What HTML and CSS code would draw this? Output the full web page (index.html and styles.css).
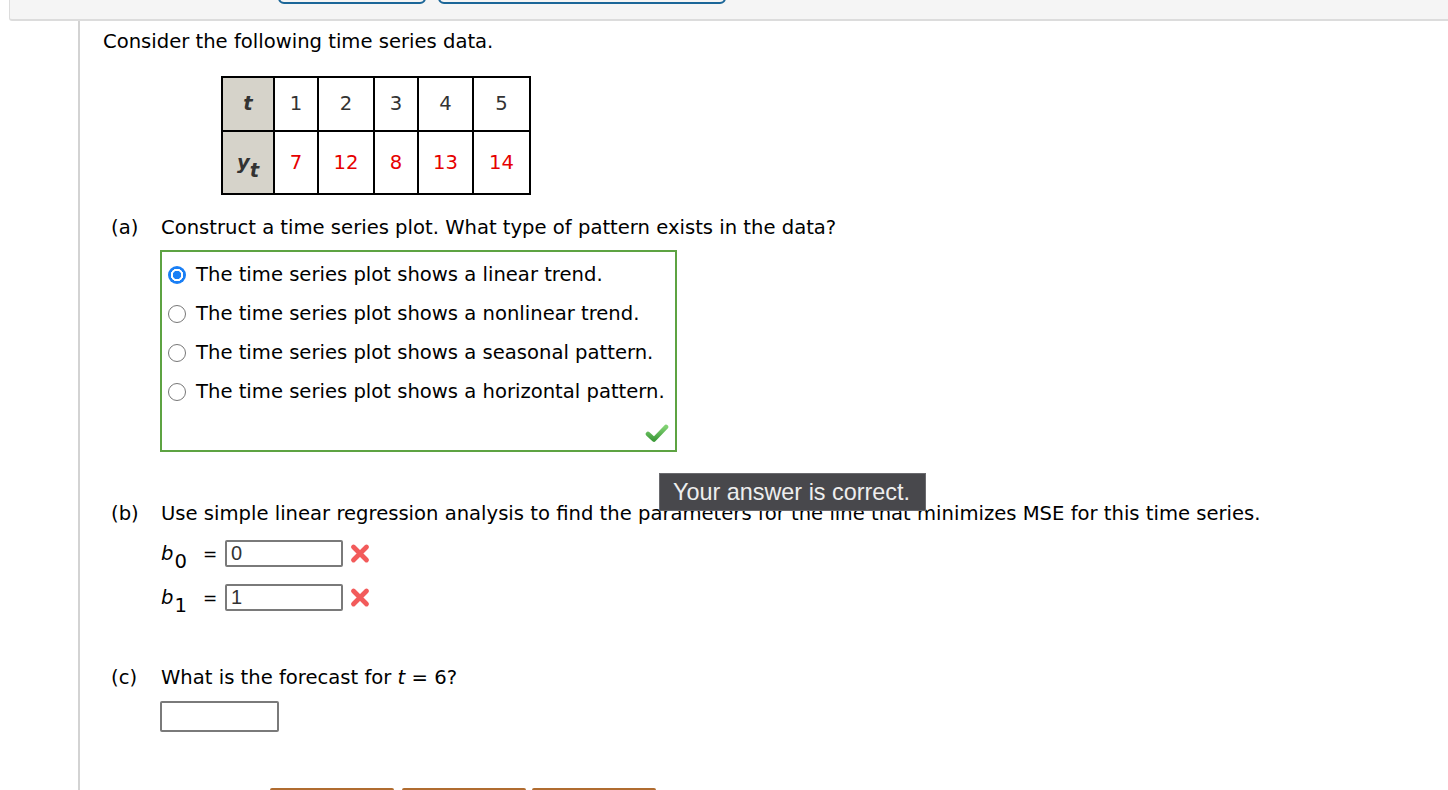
FILE: index.html
```html
<!DOCTYPE html>
<html>
<head>
<meta charset="utf-8">
<link rel="stylesheet" href="styles.css">
</head>
<body>
<div class="topbar">
  <div class="tb-btn tb-btn1"></div>
  <div class="tb-btn tb-btn2"></div>
</div>
<div class="page">
  <div class="gutter"></div>
  <div class="content">
    <p class="intro">Consider the following time series data.</p>
    <table class="data">
      <tr class="r1">
        <th class="c0"><i>t</i></th>
        <td class="c1">1</td><td class="c2">2</td><td class="c3">3</td><td class="c4">4</td><td class="c5">5</td>
      </tr>
      <tr class="r2">
        <th class="c0"><i>y<sub>t</sub></i></th>
        <td class="red">7</td><td class="red">12</td><td class="red">8</td><td class="red">13</td><td class="red">14</td>
      </tr>
    </table>

    <div class="qrow qa"><span class="qlabel">(a)</span><span>Construct a time series plot. What type of pattern exists in the data?</span></div>
    <div class="choices">
      <div class="opt"><span class="radio sel"></span><span>The time series plot shows a linear trend.</span></div>
      <div class="opt"><span class="radio"></span><span>The time series plot shows a nonlinear trend.</span></div>
      <div class="opt"><span class="radio"></span><span>The time series plot shows a seasonal pattern.</span></div>
      <div class="opt"><span class="radio"></span><span>The time series plot shows a horizontal pattern.</span></div>
      <svg class="check" width="24" height="20" viewBox="0 0 24 20">
        <defs><linearGradient id="g" x1="0" y1="0" x2="0" y2="1"><stop offset="0" stop-color="#80d172"/><stop offset="1" stop-color="#3f9c3b"/></linearGradient></defs>
        <path d="M3 11 L9 16.5 L21 4" fill="none" stroke="url(#g)" stroke-width="4.6" stroke-linecap="round" stroke-linejoin="round"/>
      </svg>
    </div>

    <div class="qrow qb"><span class="qlabel">(b)</span><span>Use simple linear regression analysis to find the parameters for the line that minimizes MSE for this time series.</span></div>
    <div class="brow brow0">
      <span class="var"><i>b</i><sub>0</sub></span><span class="eq">=</span><span class="inp">0</span>
      <svg class="xmark" width="22" height="21" viewBox="0 0 22 21"><path d="M4.5 4 L17.5 17 M17.5 4 L4.5 17" stroke="#f25b5b" stroke-width="4.8" stroke-linecap="round"/></svg>
    </div>
    <div class="brow brow1">
      <span class="var"><i>b</i><sub>1</sub></span><span class="eq">=</span><span class="inp">1</span>
      <svg class="xmark" width="22" height="21" viewBox="0 0 22 21"><path d="M4.5 4 L17.5 17 M17.5 4 L4.5 17" stroke="#f25b5b" stroke-width="4.8" stroke-linecap="round"/></svg>
    </div>

    <div class="qrow qc"><span class="qlabel">(c)</span><span>What is the forecast for <i>t</i> = 6?</span></div>
    <div class="cinp"></div>

    <div class="bottombtns">
      <div class="bbtn bb1"></div><div class="bbtn bb2"></div><div class="bbtn bb3"></div>
    </div>

    <div class="tooltip">Your answer is correct.</div>
  </div>
</div>
</body>
</html>
```
FILE: styles.css
```css
html, body {
  margin: 0;
  padding: 0;
  background: #fff;
  overflow: hidden;
  height: 790px;
}
body {
  font-family: Verdana, "DejaVu Sans", sans-serif;
  font-size: 19.6px;
  color: #000;
}
.topbar {
  margin-left: 9px;
  height: 19px;
  background: #f5f5f5;
  border-left: 1px solid #dcdcdc;
  border-bottom: 2px solid #dcdcdc;
  border-bottom-left-radius: 3px;
  display: flex;
  align-items: flex-start;
}
.tb-btn {
  height: 28px;
  margin-top: -24px;
  border: 2px solid #1b6698;
  border-radius: 6px;
  box-sizing: border-box;
}
.tb-btn1 { margin-left: 268px; width: 148px; }
.tb-btn2 { margin-left: 12px; width: 288px; }

.page {
  display: flex;
  height: 769px;
}
.gutter {
  width: 78px;
  border-right: 2px solid #d3d3d3;
  flex: none;
}
.content {
  position: relative;
  flex: 1;
  padding-left: 23px;
}
.intro {
  margin: 9px 0 0 0;
  line-height: 24px;
}
.data {
  border-collapse: collapse;
  margin: 22px 0 0 118px;
}
.data th, .data td {
  border: 2px solid #000;
  padding: 0;
  text-align: center;
  color: #333;
  font-weight: normal;
  line-height: 24px;
}
.data th {
  background: #d6d3ca;
  font-weight: bold;
  width: 50px;
}
.data th sub { font-size: 19.6px; vertical-align: -8px; line-height: 0; }
.data .r1 { height: 54px; }
.data .r2 { height: 63px; }
.data .c1 { width: 42px; }
.data .c2 { width: 54px; }
.data .c3 { width: 42px; }
.data .c4 { width: 53px; }
.data .c5 { width: 55px; }
.data td.red { color: #e60000; }

.qrow {
  display: flex;
  line-height: 24px;
  padding-left: 8px;
}
.qlabel { width: 50px; flex: none; }
.qa { margin-top: 21px; }
.choices {
  margin: 10px 0 0 57px;
  width: 517px;
  height: 202px;
  box-sizing: border-box;
  border: 2px solid #5da342;
  padding: 3px 7px 7px 6px;
  display: flex;
  flex-direction: column;
}
.opt {
  display: flex;
  align-items: center;
  height: 39px;
}
.radio {
  width: 18px;
  height: 18px;
  box-sizing: border-box;
  border: 1px solid #777;
  border-radius: 50%;
  background: #fff;
  margin-right: 10px;
  flex: none;
}
.radio.sel {
  border: none;
  background: radial-gradient(circle, #1a7ff5 0 4px, #fff 4.5px 6px, #1a7ff5 6.5px);
}
.check {
  margin-top: auto;
  align-self: flex-end;
  margin-right: -1px;
}
.qb { margin-top: 50px; }
.brow {
  display: flex;
  align-items: center;
  height: 27px;
  margin-top: 14px;
  padding-left: 58px;
}
.var { width: 42px; flex: none; }
.var sub { font-size: 19.6px; vertical-align: -8px; line-height: 0; margin-left: 1px; }
.eq { width: 22px; flex: none; font-size: 17px; }
.inp {
  width: 118px;
  height: 27px;
  box-sizing: border-box;
  border: 2px solid #7a7a7a;
  border-radius: 2px;
  font-family: "Liberation Sans", Arial, sans-serif;
  font-size: 20px;
  line-height: 23px;
  padding-left: 4px;
  color: #333;
}
.xmark { margin-left: 6px; }
.brow1 { margin-top: 17px; }
.qc { margin-top: 55px; }
.cinp {
  margin: 11px 0 0 57px;
  width: 119px;
  height: 31px;
  box-sizing: border-box;
  border: 2px solid #7a7a7a;
  border-radius: 2px;
}
.bottombtns {
  display: flex;
  margin: 56px 0 0 167px;
}
.bbtn {
  height: 30px;
  box-sizing: border-box;
  border: 2px solid #b06c30;
  background: #e6a46a;
  border-radius: 2px;
}
.bb1 { width: 124px; }
.bb2 { width: 124px; margin-left: 8px; }
.bb3 { width: 124px; margin-left: 6px; }

.tooltip {
  position: absolute;
  left: 579px;
  top: 452px;
  width: 267px;
  height: 38px;
  box-sizing: border-box;
  background: #48484c;
  border: 1px solid #6a6a6e;
  color: #eeeeee;
  font-family: "Liberation Sans", Arial, Helvetica, sans-serif;
  font-size: 23.4px;
  line-height: 36px;
  padding-left: 13px;
  white-space: nowrap;
}
```
